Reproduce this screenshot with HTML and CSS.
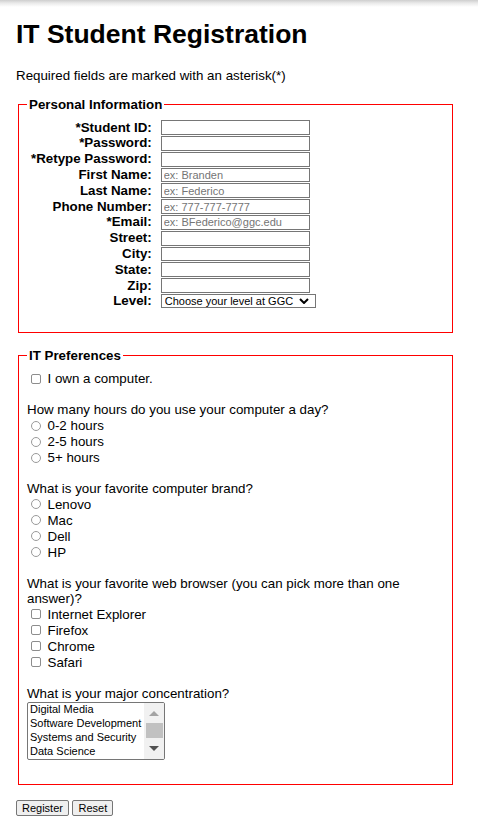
FILE: index.html
```html
<!DOCTYPE html>
<html lang="en">
<head>
<meta charset="utf-8">
<title>IT Student Registration</title>
<link rel="stylesheet" href="styles.css">
</head>
<body>
<h1 class="title">IT Student Registration</h1>
<p class="note">Required fields are marked with an asterisk(*)</p>
<form class="reg">
  <fieldset class="fs">
    <legend class="fs-legend">Personal Information</legend>
    <div class="grid">
      <label class="lbl" for="sid">*Student ID:</label><input class="field" id="sid" type="text">
      <label class="lbl" for="pw">*Password:</label><input class="field" id="pw" type="password">
      <label class="lbl" for="pw2">*Retype Password:</label><input class="field" id="pw2" type="password">
      <label class="lbl" for="fn">First Name:</label><input class="field" id="fn" type="text" placeholder="ex: Branden">
      <label class="lbl" for="ln">Last Name:</label><input class="field" id="ln" type="text" placeholder="ex: Federico">
      <label class="lbl" for="ph">Phone Number:</label><input class="field" id="ph" type="tel" placeholder="ex: 777-777-7777">
      <label class="lbl" for="em">*Email:</label><input class="field" id="em" type="email" placeholder="ex: BFederico@ggc.edu">
      <label class="lbl" for="st">Street:</label><input class="field" id="st" type="text">
      <label class="lbl" for="ci">City:</label><input class="field" id="ci" type="text">
      <label class="lbl" for="sa">State:</label><input class="field" id="sa" type="text">
      <label class="lbl" for="zp">Zip:</label><input class="field" id="zp" type="text">
      <label class="lbl" for="lv">Level:</label>
      <span class="select-wrap">
        <select class="select" id="lv">
          <option>Choose your level at GGC</option>
          <option>Freshman</option>
          <option>Sophomore</option>
          <option>Junior</option>
          <option>Senior</option>
        </select>
        <svg class="chev" width="10" height="6" viewBox="0 0 10 6" aria-hidden="true"><polyline points="1,1 5,5 9,1" fill="none" stroke="#000" stroke-width="2"/></svg>
      </span>
    </div>
  </fieldset>

  <fieldset class="fs">
    <legend class="fs-legend">IT Preferences</legend>
    <label class="opt"><input class="opt-input box" type="checkbox">I own a computer.</label>

    <p class="q">How many hours do you use your computer a day?</p>
    <label class="opt"><input class="opt-input round" type="radio" name="hours">0-2 hours</label>
    <label class="opt"><input class="opt-input round" type="radio" name="hours">2-5 hours</label>
    <label class="opt"><input class="opt-input round" type="radio" name="hours">5+ hours</label>

    <p class="q">What is your favorite computer brand?</p>
    <label class="opt"><input class="opt-input round" type="radio" name="brand">Lenovo</label>
    <label class="opt"><input class="opt-input round" type="radio" name="brand">Mac</label>
    <label class="opt"><input class="opt-input round" type="radio" name="brand">Dell</label>
    <label class="opt"><input class="opt-input round" type="radio" name="brand">HP</label>

    <p class="q">What is your favorite web browser (you can pick more than one answer)?</p>
    <label class="opt"><input class="opt-input box" type="checkbox">Internet Explorer</label>
    <label class="opt"><input class="opt-input box" type="checkbox">Firefox</label>
    <label class="opt"><input class="opt-input box" type="checkbox">Chrome</label>
    <label class="opt"><input class="opt-input box" type="checkbox">Safari</label>

    <p class="q">What is your major concentration?</p>
    <div class="listbox" role="listbox" aria-label="Major concentration">
      <div class="lb-options">
        <div class="lb-opt" role="option">Digital Media</div>
        <div class="lb-opt" role="option">Software Development</div>
        <div class="lb-opt" role="option">Systems and Security</div>
        <div class="lb-opt" role="option">Data Science</div>
      </div>
      <div class="lb-scroll" aria-hidden="true">
        <div class="lb-btn lb-up"><svg width="10" height="5" viewBox="0 0 10 5"><polygon points="0,5 5,0 10,5" fill="#a3a3a3"/></svg></div>
        <div class="lb-thumb"></div>
        <div class="lb-btn lb-down"><svg width="10" height="5" viewBox="0 0 10 5"><polygon points="0,0 10,0 5,5" fill="#505050"/></svg></div>
      </div>
    </div>
  </fieldset>

  <div class="actions">
    <button class="btn" type="submit">Register</button>
    <button class="btn" type="reset">Reset</button>
  </div>
</form>
</body>
</html>
```

FILE: styles.css
```css
html {
  background: #fff linear-gradient(#cecece, #e9e9e9 3px, #fff 7px) no-repeat 0 0 / 100% 7px;
}

body {
  margin: 0;
  padding: 19px 23px 0 16px;
  font: 13.33px/15.33px "Liberation Sans", Arial, sans-serif;
  color: #000;
}

.title {
  font-size: 26.5px;
  line-height: 30px;
  font-weight: bold;
  margin: 0 0 18.7px;
}

.note {
  margin: 0 0 13.8px;
}

.reg {
  margin: 0;
}

.fs {
  border: 1px solid #f00;
  margin: 0 2px 14.8px;
  padding: 8px 8px 22.3px;
  min-width: 0;
}

.fs-legend {
  padding: 0 2px;
  font-weight: bold;
}

.grid {
  display: grid;
  grid-template-columns: max-content max-content;
  grid-auto-rows: 15.8px;
  column-gap: 9px;
  align-items: baseline;
  margin-left: 4px;
}

.lbl {
  justify-self: end;
  font-weight: bold;
  line-height: 14px;
}

.field {
  justify-self: start;
  width: 149px;
  height: 14.8px;
  box-sizing: border-box;
  margin: 0;
  padding: 0 2px;
  border: 1px solid #767676;
  border-radius: 0;
  background: #fff;
  color: #000;
  font: 11px "Liberation Sans", Arial, sans-serif;
  outline: none;
}

.field::placeholder {
  color: #757575;
}

.select-wrap {
  position: relative;
  display: flex;
  justify-self: start;
}

.select {
  appearance: none;
  -webkit-appearance: none;
  width: 155px;
  height: 14px;
  box-sizing: border-box;
  margin: 0;
  padding: 0 0 0 3px;
  border: 1px solid #767676;
  border-radius: 0;
  background: #fff;
  color: #000;
  font: 11px "Liberation Sans", Arial, sans-serif;
}

.chev {
  position: absolute;
  right: 7px;
  top: 4px;
  pointer-events: none;
}

.opt {
  display: flex;
  align-items: center;
  height: 16px;
}

.opt-input {
  appearance: none;
  -webkit-appearance: none;
  box-sizing: border-box;
  width: 10px;
  height: 10px;
  margin: 0 6.5px 0 4px;
  flex: none;
  border: 1px solid #8d8d8d;
  background: #fff;
}

.box {
  border-radius: 2px;
}

.round {
  border-radius: 50%;
  border-color: #9a9a9a;
}

.q {
  margin: 15.33px 0 0;
}

.listbox {
  display: flex;
  width: 138px;
  height: 58px;
  box-sizing: border-box;
  margin: 1px 0 2px;
  border: 1px solid #767676;
  border-radius: 2px;
  background: #fff;
  overflow: hidden;
  font-size: 11px;
  line-height: 12px;
}

.lb-options {
  flex: 1;
  min-width: 0;
}

.lb-opt {
  height: 14px;
  padding: 0 2px;
  white-space: nowrap;
  overflow: hidden;
}

.lb-scroll {
  width: 20px;
  flex: none;
  display: flex;
  flex-direction: column;
  background: #f1f1f1;
}

.lb-btn {
  display: flex;
  align-items: center;
  justify-content: center;
}

.lb-btn svg {
  display: block;
}

.lb-up {
  height: 20px;
}

.lb-thumb {
  height: 15px;
  margin: 0 1.5px;
  background: #c1c1c1;
}

.lb-down {
  flex: 1;
}

.actions {
  display: flex;
  gap: 3.5px;
}

.btn {
  height: 16px;
  box-sizing: border-box;
  margin: 0;
  padding: 0 5px;
  border: 1px solid #767676;
  border-radius: 2px;
  background: #efefef;
  color: #000;
  font: 11px/12px "Liberation Sans", Arial, sans-serif;
}
```
